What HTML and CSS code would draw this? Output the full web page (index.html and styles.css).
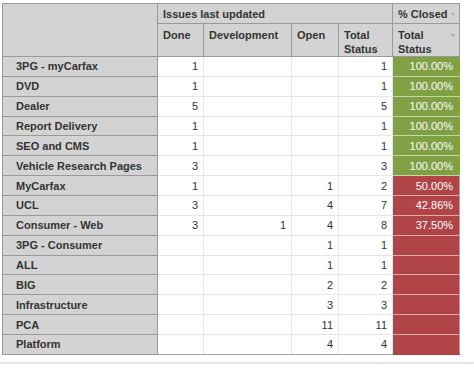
FILE: index.html
```html
<!DOCTYPE html>
<html>
<head>
<meta charset="utf-8">
<link rel="stylesheet" href="styles.css">
</head>
<body>
<div class="wrap">
<table class="pivot">
  <colgroup>
    <col class="c-label"><col class="c-done"><col class="c-dev"><col class="c-open"><col class="c-total"><col class="c-pct">
  </colgroup>
  <thead>
    <tr class="h1">
      <th class="corner" rowspan="2"></th>
      <th class="grp" colspan="4">Issues last updated</th>
      <th class="grp"><div class="hd"><span>% Closed</span><span class="caret"></span></div></th>
    </tr>
    <tr class="h2">
      <th class="sub">Done</th>
      <th class="sub">Development</th>
      <th class="sub">Open</th>
      <th class="sub">Total<br>Status</th>
      <th class="sub"><div class="hd"><span>Total<br>Status</span><span class="caret"></span></div></th>
    </tr>
  </thead>
  <tbody>
    <tr><th>3PG - myCarfax</th><td>1</td><td></td><td></td><td>1</td><td class="g">100.00%</td></tr>
    <tr><th>DVD</th><td>1</td><td></td><td></td><td>1</td><td class="g">100.00%</td></tr>
    <tr><th>Dealer</th><td>5</td><td></td><td></td><td>5</td><td class="g">100.00%</td></tr>
    <tr><th>Report Delivery</th><td>1</td><td></td><td></td><td>1</td><td class="g">100.00%</td></tr>
    <tr><th>SEO and CMS</th><td>1</td><td></td><td></td><td>1</td><td class="g">100.00%</td></tr>
    <tr><th>Vehicle Research Pages</th><td>3</td><td></td><td></td><td>3</td><td class="g">100.00%</td></tr>
    <tr><th>MyCarfax</th><td>1</td><td></td><td>1</td><td>2</td><td class="r">50.00%</td></tr>
    <tr><th>UCL</th><td>3</td><td></td><td>4</td><td>7</td><td class="r">42.86%</td></tr>
    <tr><th>Consumer - Web</th><td>3</td><td>1</td><td>4</td><td>8</td><td class="r">37.50%</td></tr>
    <tr><th>3PG - Consumer</th><td></td><td></td><td>1</td><td>1</td><td class="r"></td></tr>
    <tr><th>ALL</th><td></td><td></td><td>1</td><td>1</td><td class="r"></td></tr>
    <tr><th>BIG</th><td></td><td></td><td>2</td><td>2</td><td class="r"></td></tr>
    <tr><th>Infrastructure</th><td></td><td></td><td>3</td><td>3</td><td class="r"></td></tr>
    <tr><th>PCA</th><td></td><td></td><td>11</td><td>11</td><td class="r"></td></tr>
    <tr class="last"><th>Platform</th><td></td><td></td><td>4</td><td>4</td><td class="r"></td></tr>
  </tbody>
</table>
</div>
<div class="rule"></div>
</body>
</html>
```
FILE: styles.css
```css
html, body {
  margin: 0;
  padding: 0;
  background: #fff;
}
body {
  font-family: "Liberation Sans", Arial, sans-serif;
  font-size: 11px;
  color: #333;
}
.wrap {
  padding: 3px 0 0 2px;
}
.pivot {
  border-collapse: collapse;
  table-layout: fixed;
  width: 457px;
}
.c-label { width: 155px; }
.c-done { width: 46px; }
.c-dev { width: 88px; }
.c-open { width: 47px; }
.c-total { width: 54px; }
.c-pct { width: 67px; }

.pivot th, .pivot td {
  padding: 0 5px;
  overflow: hidden;
  white-space: nowrap;
}
.pivot thead th {
  background: #d3d3d3;
  border: 1px solid #999;
  font-weight: bold;
  text-align: left;
  color: #333;
}
.h1 { height: 20px; }
.h1 th { vertical-align: middle; line-height: 14px; }
.h2 { height: 32px; }
.h2 th { vertical-align: top; padding-top: 4px; line-height: 14px; }
.pivot thead th.corner { background: #d3d3d3; }

.hd {
  display: flex;
  justify-content: space-between;
  align-items: flex-start;
}
.h1 .hd { align-items: center; }
.caret {
  width: 0;
  height: 0;
  border-left: 2.5px solid transparent;
  border-right: 2.5px solid transparent;
  border-top: 3px solid #a8a8a8;
  margin-top: 6px;
  margin-right: -1px;
}
.h1 .caret { margin-top: 1px; }

.pivot tbody tr { height: 19.87px; }
.pivot tbody th {
  background: #d3d3d3;
  border: 1px solid #999;
  border-top-color: #9d9d9d;
  text-align: left;
  font-weight: bold;
  padding-left: 13px;
  color: #333;
}
.pivot tbody td {
  border: 1px solid #e6e6e6;
  text-align: right;
  padding-right: 5px;
  color: #333;
}
.pivot tbody tr.last td { border-bottom: 1px solid #a5a5a5; }
.pivot tbody tr.last th { border-bottom: 1px solid #999; }

.pivot tbody td.g {
  background: #80a044;
  color: #fff;
  border: 1px solid #80a044;
  border-bottom: 1px solid #c5d6a6;
  padding-right: 6px;
}
.pivot tbody td.r {
  background: #b04446;
  color: #fff;
  border: 1px solid #a5a5a5;
  border-top: 1px solid #e3aaaa;
  border-bottom: 1px solid #e3aaaa;
  padding-right: 6px;
}
.pivot tbody tr.last td.r { border-bottom: 1px solid #a34244; }

.rule {
  height: 2px;
  background: #e6e6e6;
  margin-top: 7px;
}
```
